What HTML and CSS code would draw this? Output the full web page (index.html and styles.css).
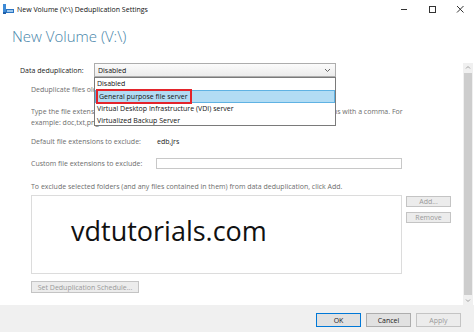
FILE: index.html
```html
<!DOCTYPE html>
<html>
<head>
<meta charset="utf-8">
<link rel="stylesheet" href="styles.css">
</head>
<body>
<div class="window">
  <div class="titlebar">
    <svg class="appicon" width="11" height="10" viewBox="0 0 11 10">
      <rect x="0" y="0" width="3" height="8" fill="#3d8ad6"/>
      <rect x="3" y="5" width="8" height="4" fill="#2b74c2"/>
      <rect x="4" y="6" width="6" height="2" fill="#9cc8ee"/>
      <rect x="0" y="8" width="3" height="2" fill="#1f5fa8"/>
    </svg>
    <span class="title">New Volume (V:\) Deduplication Settings</span>
    <div class="controls">
      <svg class="ctl" width="28" height="16" viewBox="0 0 28 16"><line x1="11" y1="8.5" x2="17" y2="8.5" stroke="#333" stroke-width="1"/></svg>
      <svg class="ctl" width="28" height="16" viewBox="0 0 28 16"><rect x="11.5" y="5.5" width="6" height="6" fill="none" stroke="#333" stroke-width="1"/></svg>
      <svg class="ctl" width="28" height="16" viewBox="0 0 28 16"><path d="M11 5 L17.5 11.5 M17.5 5 L11 11.5" stroke="#333" stroke-width="1"/></svg>
    </div>
  </div>
  <h1 class="heading">New Volume (V:\)</h1>
  <div class="body">
    <div class="main">
      <div class="row row-dedup">
        <span class="lbl-dedup">Data deduplication:</span>
        <div class="combo">
          <div class="combo-box">
            <span>Disabled</span>
            <svg width="7" height="5" viewBox="0 0 7 5"><path d="M1 1 L3.5 3.5 L6 1" fill="none" stroke="#666" stroke-width="1"/></svg>
          </div>
          <ul class="combo-list">
            <li class="item">Disabled</li>
            <li class="item item-sel"><span class="redbox">General purpose file server</span></li>
            <li class="item">Virtual Desktop Infrastructure (VDI) server</li>
            <li class="item">Virtualized Backup Server</li>
          </ul>
        </div>
      </div>
      <div class="indent">
        <div class="row row-older">Deduplicate files older than (in days):</div>
        <p class="desc"><span class="line">Type the file extensions that you want to exclude from data deduplication. Separate extensions with a comma. For</span><span class="line">example: doc,txt,png</span></p>
        <div class="row row-default">
          <span class="lbl lbl-wide">Default file extensions to exclude:</span>
          <span class="val">edb,jrs</span>
        </div>
        <div class="row row-custom">
          <span class="lbl lbl-custom">Custom file extensions to exclude:</span>
          <div class="input"></div>
        </div>
        <p class="note">To exclude selected folders (and any files contained in them) from data deduplication, click Add.</p>
        <div class="folders">
          <div class="listbox"><span class="watermark">vdtutorials.com</span></div>
          <div class="side-btns">
            <div class="btn btn-off side">Add...</div>
            <div class="btn btn-off side">Remove</div>
          </div>
        </div>
        <div class="btn btn-off schedule">Set Deduplication Schedule...</div>
      </div>
    </div>
    <div class="scrollbar">
      <svg class="arrow" width="10" height="9" viewBox="0 0 10 9"><path d="M3 5.5 L5 3.5 L7 5.5" fill="none" stroke="#a0a0a0" stroke-width="1"/></svg>
      <div class="thumb"></div>
      <svg class="arrow" width="10" height="9" viewBox="0 0 10 9"><path d="M3 3.5 L5 5.5 L7 3.5" fill="none" stroke="#a0a0a0" stroke-width="1"/></svg>
    </div>
  </div>
  <div class="footer">
    <div class="btn btn-ok">OK</div>
    <div class="btn">Cancel</div>
    <div class="btn btn-off">Apply</div>
  </div>
</div>
</body>
</html>
```

FILE: styles.css
```css
* { box-sizing: border-box; }
html, body { margin: 0; padding: 0; background: #fff; }
body {
  font-family: "Open Sans", "Noto Sans", sans-serif;
  font-size: 7px;
  color: #6d6d6d;
}
.window {
  width: 474px;
  height: 332px;
  display: flex;
  flex-direction: column;
  background: #fff;
  overflow: hidden;
}
.titlebar {
  height: 18px;
  display: flex;
  align-items: center;
  padding-left: 3px;
}
.appicon { margin-right: 3px; }
.title { font-size: 7px; color: #111; }
.controls {
  margin-left: auto;
  display: flex;
}
.ctl { display: block; }
.heading {
  margin: 0;
  height: 37px;
  padding: 8px 0 0 12px;
  font-size: 15px;
  line-height: 20px;
  font-weight: 300;
  color: #4785a9;
}
.body {
  flex: 1;
  display: flex;
}
.main {
  flex: 1;
  padding: 8px 0 0 20px;
}
.row { display: flex; align-items: center; }
.row-dedup { height: 14px; }
.lbl-dedup { width: 74px; color: #1a1a1a; }
.combo { position: relative; }
.combo-box {
  width: 242px;
  height: 14px;
  border: 1px solid #adadad;
  background: linear-gradient(#fbfbfb, #ececec);
  display: flex;
  align-items: center;
  justify-content: space-between;
  padding: 0 4px 0 3px;
  color: #111;
}
.combo-list {
  position: absolute;
  left: 0;
  top: 14px;
  width: 242px;
  height: 49px;
  margin: 0;
  padding: 0;
  list-style: none;
  background: #fff;
  border: 1px solid #7a7a7a;
  z-index: 2;
  color: #111;
}
.item {
  height: 12px;
  line-height: 12px;
  padding-left: 2px;
}
.item-sel {
  height: 13px;
  line-height: 12px;
  background: #b2dcf4;
  border: 1px solid #5fb2e3;
  padding-left: 0;
}
.redbox {
  display: inline-block;
  border: 2px solid #e3242b;
  padding: 0 2px 0 1px;
  margin-top: -2px;
  line-height: 11px;
  width: 96px;
}
.indent { padding-left: 11px; }
.row-older { height: 12px; margin-top: 6px; }
.desc {
  margin: 11px 0 0 0;
  width: 372px;
  line-height: 11px;
}
.line { display: block; white-space: nowrap; overflow: hidden; }
.row-default { height: 12px; margin-top: 7px; }
.lbl-wide { width: 126px; }
.val { color: #1a1a1a; }
.row-custom { height: 12px; margin-top: 10px; }
.lbl-custom { width: 125px; }
.input {
  width: 246px;
  height: 11px;
  border: 1px solid #c8c8c8;
  background: #fff;
}
.note { margin: 12px 0 0 0; line-height: 12px; }
.folders {
  display: flex;
  margin-top: 2px;
  gap: 4px;
}
.listbox {
  width: 371px;
  height: 79px;
  border: 1px solid #dcdcdc;
  display: flex;
  align-items: center;
  padding-left: 39px;
}
.watermark {
  font-size: 27px;
  color: #111;
  line-height: 30px;
  margin-top: -7px;
}
.side-btns {
  display: flex;
  flex-direction: column;
  gap: 5px;
  padding-top: 1px;
}
.btn {
  height: 14px;
  width: 45px;
  display: flex;
  align-items: center;
  justify-content: center;
  background: #e1e1e1;
  border: 1px solid #adadad;
  color: #1a1a1a;
}
.btn-off {
  background: #ececec;
  border-color: #c4c4c4;
  color: #9a9a9a;
}
.side { height: 11px; }
.schedule {
  width: 108px;
  height: 12px;
  margin-top: 7px;
}
.scrollbar {
  width: 10px;
  margin: 8px 1px 0 0;
  background: #f0f0f0;
  display: flex;
  flex-direction: column;
}
.arrow { display: block; flex: none; }
.thumb { flex: 1; background: #cdcdcd; margin: 1px 1px; }
.footer {
  height: 27px;
  background: #f0f0f0;
  display: flex;
  justify-content: flex-end;
  gap: 5px;
  padding: 8px 13px 0 0;
}
.btn-ok { border-color: #0078d7; }
```
